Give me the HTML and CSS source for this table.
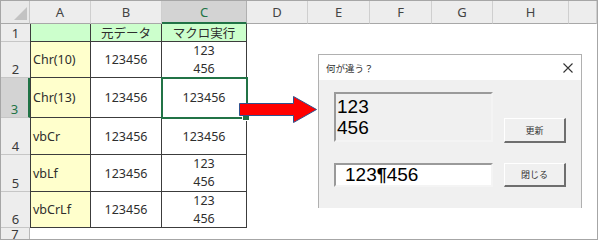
FILE: index.html
```html
<!DOCTYPE html>
<html lang="ja">
<head>
<meta charset="utf-8">
<link rel="stylesheet" href="styles.css">
</head>
<body>
<div class="sheet">
  <div class="grid">
    <div class="corner"><svg class="tri" width="13" height="13" viewBox="0 0 13 13"><polygon points="13,0 13,13 0,13" fill="#c3c3c3"/></svg></div>
    <div class="ch">A</div>
    <div class="ch">B</div>
    <div class="ch sel">C</div>
    <div class="ch">D</div>
    <div class="ch">E</div>
    <div class="ch">F</div>
    <div class="ch">G</div>
    <div class="ch">H</div>
    <div class="ch"></div>

    <div class="rh mid">1</div>
    <div class="c a green first"></div>
    <div class="c ctr green">元データ</div>
    <div class="c ctr green">マクロ実行</div>

    <div class="rh">2</div>
    <div class="c a yellow">Chr(10)</div>
    <div class="c ctr">123456</div>
    <div class="c ctr two"><span>123</span><span>456</span></div>

    <div class="rh rsel">3</div>
    <div class="c a yellow">Chr(13)</div>
    <div class="c ctr">123456</div>
    <div class="c ctr active">123456</div>

    <div class="rh">4</div>
    <div class="c a yellow">vbCr</div>
    <div class="c ctr">123456</div>
    <div class="c ctr">123456</div>

    <div class="rh">5</div>
    <div class="c a yellow">vbLf</div>
    <div class="c ctr">123456</div>
    <div class="c ctr two"><span>123</span><span>456</span></div>

    <div class="rh">6</div>
    <div class="c a yellow">vbCrLf</div>
    <div class="c ctr">123456</div>
    <div class="c ctr two"><span>123</span><span>456</span></div>

    <div class="rh last">7</div>
  </div>

  <svg class="arrow" width="79" height="28" viewBox="0 0 79 28">
    <path d="M0.5 7.5 H54.5 V0.5 L77.5 13.5 L54.5 26.5 V19.5 H0.5 Z" fill="#ff0000" stroke="#2f528f" stroke-width="1"/>
  </svg>

  <div class="dialog">
    <div class="titlebar">
      <span class="title">何が違う？</span>
      <svg class="close" width="10" height="10" viewBox="0 0 10 10"><path d="M0.5 0.5 L9.5 9.5 M9.5 0.5 L0.5 9.5" stroke="#333" stroke-width="1.1"/></svg>
    </div>
    <div class="dbody">
      <div class="tb multi"><span>123</span><span>456</span></div>
      <div class="btn b1">更新</div>
      <div class="tb single">123<b class="pil">¶</b>456</div>
      <div class="btn b2">閉じる</div>
    </div>
  </div>
</div>
</body>
</html>
```

FILE: styles.css
```css
* { box-sizing: border-box; }
html, body { margin: 0; padding: 0; background: #fff; }

.sheet {
  position: relative;
  width: 598px;
  height: 240px;
  border: 1px solid #a6a6a6;
  overflow: hidden;
  font-family: "Noto Sans", "Noto Sans CJK JP", sans-serif;
  color: #333;
}

.grid {
  display: grid;
  grid-template-columns: 29px 61px 71px 85px 61px 62px 62px 61px 76px 1fr;
  grid-template-rows: 23px 18px 36px 40px 37px 37px 36px 1fr;
  height: 100%;
}

.corner {
  background: #e9e9e9;
  border-right: 1px solid #c8c8c8;
  border-bottom: 1px solid #a8a8a8;
  display: flex;
  align-items: flex-end;
  justify-content: flex-end;
  padding: 0 2px 3px 0;
}

.ch {
  background: #ededed;
  border-right: 1px solid #cfcfcf;
  border-bottom: 1px solid #a8a8a8;
  display: flex;
  align-items: center;
  justify-content: center;
  font-size: 13px;
  color: #444;
}
.ch.sel {
  background: #d3d3d3;
  color: #217346;
  border-bottom: 2px solid #217346;
  border-right-color: #b0b0b0;
}

.rh {
  grid-column: 1;
  background: #ededed;
  border-bottom: 1px solid #c6c6c6;
  display: flex;
  align-items: flex-end;
  justify-content: center;
  font-size: 13px;
  line-height: 14px;
  padding-bottom: 1px;
  color: #3a3a3a;
  overflow: hidden;
}
.rh.mid { align-items: center; padding-bottom: 0; }
.rh.rsel {
  background: #d3d3d3;
  color: #217346;
  border-right: 2px solid #217346;
}
.rh.last {
  border-right: 1px solid #b8b8b8;
  border-bottom: none;
  align-items: flex-start;
  padding-bottom: 0;
  padding-top: 0;
  line-height: 13px;
}

.c {
  border-right: 1px solid #3c3c3c;
  border-bottom: 1px solid #3c3c3c;
  display: flex;
  align-items: center;
  font-size: 12.5px;
  color: #2e2e2e;
  background: #fff;
}
.c.a { border-left: 1px solid #3c3c3c; padding-left: 2px; }
.c.ctr { justify-content: center; }
.c.green { background: #ccffcc; }
.c.yellow { background: #ffffcc; }
.c.two {
  flex-direction: column;
  line-height: 18px;
}
.c.active {
  position: relative;
  outline: 2px solid #217346;
  outline-offset: -1px;
}
.c.active::after {
  content: "";
  position: absolute;
  right: -4px;
  bottom: -4px;
  width: 6px;
  height: 6px;
  background: #217346;
  border: 1px solid #fff;
}

.arrow {
  position: absolute;
  left: 238px;
  top: 95px;
}

.dialog {
  position: absolute;
  left: 317px;
  top: 53px;
  width: 264px;
  height: 154px;
  border: 1px solid #b0b0b0;
  border-bottom: none;
  background: #f0f0f0;
  font-family: "Noto Sans CJK JP", sans-serif;
}
.titlebar {
  height: 25px;
  background: #fff;
  display: flex;
  align-items: center;
  justify-content: space-between;
  padding: 0 8px 0 7px;
}
.title { font-size: 9.5px; color: #333; }
.close { display: block; }

.dbody {
  display: grid;
  grid-template-columns: 159px 62px;
  grid-template-rows: 50px 24px;
  column-gap: 11px;
  row-gap: 21px;
  padding: 12px 0 0 15px;
}

.tb {
  border: 2px solid;
  border-color: #9a9a9a #f4f4f4 #f4f4f4 #9a9a9a;
  font-family: "Liberation Sans", Arial, sans-serif;
  font-size: 19px;
  line-height: 21px;
  color: #000;
}
.tb.multi {
  background: #f0f0f0;
  display: flex;
  flex-direction: column;
  padding: 2px 0 0 1px;
}
.tb.single {
  background: #fff;
  padding: 0 0 0 9px;
  height: 24px;
  line-height: 20px;
}
.pil { font-weight: bold; font-size: 18px; }

.btn {
  background: #f0f0f0;
  border-top: 1px solid #fff;
  border-left: 1px solid #fff;
  border-right: 2px solid #6e6e6e;
  border-bottom: 2px solid #6e6e6e;
  display: flex;
  align-items: center;
  justify-content: center;
  font-size: 9px;
  color: #333;
}
.btn.b1 { align-self: end; height: 25px; margin-bottom: -1px; }
.btn.b2 { height: 24px; }
```
